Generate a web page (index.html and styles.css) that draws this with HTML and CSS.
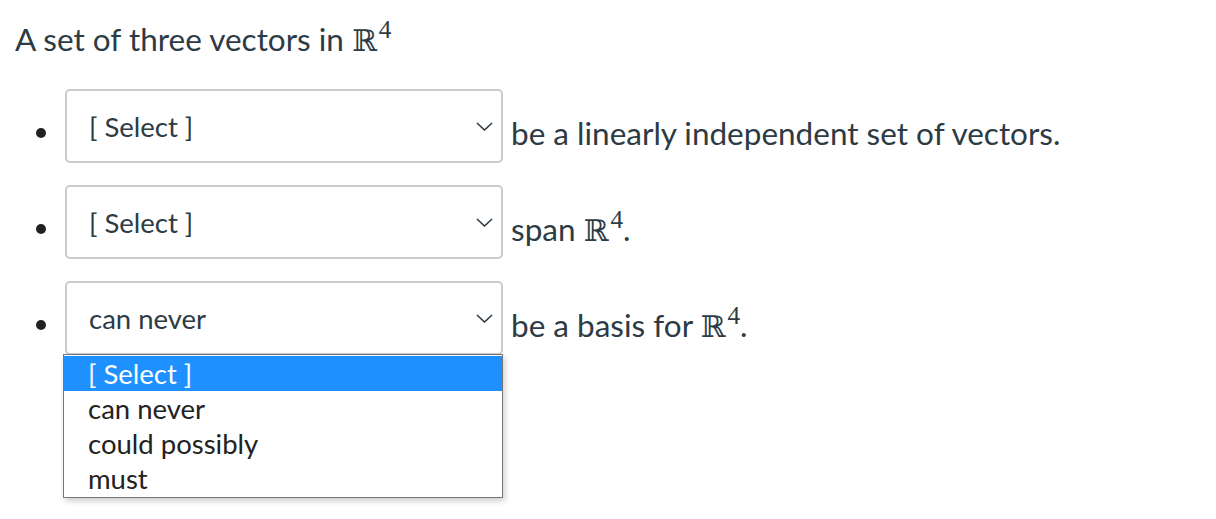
FILE: index.html
```html
<!DOCTYPE html>
<html>
    <head>
        <meta charset="UTF-8">
        <meta name="viewport" content="width=device-width, initial-scale=1">
        <title>Pergunta - Vetores</title>
        <link rel="stylesheet" href="styles.css">
    </head>
    <body>
        <div class="question">
            <p class="question-title">A set of three vectors in <span class="math"><span class="bb">ℝ</span><sup>4</sup></span></p>

            <ul class="answer-list">
                <li class="answer-item">
                    <span class="bullet"></span>
                    <div class="select-box">
                        <span class="select-value">[ Select ]</span>
                        <svg class="chevron" width="17" height="9" viewBox="0 0 17 9"><path d="M1 1 L8.5 8 L16 1" fill="none" stroke="#2d3b45" stroke-width="1.6"/></svg>
                    </div>
                    <span class="answer-text">be a linearly independent set of vectors.</span>
                </li>
                <li class="answer-item">
                    <span class="bullet"></span>
                    <div class="select-box">
                        <span class="select-value">[ Select ]</span>
                        <svg class="chevron" width="17" height="9" viewBox="0 0 17 9"><path d="M1 1 L8.5 8 L16 1" fill="none" stroke="#2d3b45" stroke-width="1.6"/></svg>
                    </div>
                    <span class="answer-text">span <span class="math"><span class="bb">ℝ</span><sup>4</sup></span>.</span>
                </li>
                <li class="answer-item">
                    <span class="bullet"></span>
                    <div class="select-box">
                        <span class="select-value">can never</span>
                        <svg class="chevron" width="17" height="9" viewBox="0 0 17 9"><path d="M1 1 L8.5 8 L16 1" fill="none" stroke="#2d3b45" stroke-width="1.6"/></svg>
                        <!-- lista aberta do select -->
                        <div class="dropdown">
                            <div class="dropdown-option selected">[ Select ]</div>
                            <div class="dropdown-option">can never</div>
                            <div class="dropdown-option">could possibly</div>
                            <div class="dropdown-option">must</div>
                        </div>
                    </div>
                    <span class="answer-text">be a basis for <span class="math"><span class="bb">ℝ</span><sup>4</sup></span>.</span>
                </li>
            </ul>
        </div>
    </body>
</html>
```

FILE: styles.css
```css
html, body {
    height: 100%;
}
body {
    margin: 0;
    background: #fff;
    color: #2d3b45;
    font-family: Lato, "Noto Sans", sans-serif;
}
.question {
    padding: 0 15px 160px;
}
.question-title {
    margin: 0;
    padding-top: 19px;
    font-size: 31.5px;
    line-height: 40px;
}
.math {
    font-family: "DejaVu Serif", "Liberation Serif", serif;
}
.bb {
    font-size: 0.95em;
}
.math sup {
    font-family: "Liberation Serif", "DejaVu Serif", serif;
    font-size: 0.8em;
    vertical-align: 0.5em;
    line-height: 0;
    margin-left: 2px;
}
.answer-list {
    list-style: none;
    margin: 0;
    padding: 0;
    padding-top: 28px;
}
.answer-item {
    display: flex;
    align-items: center;
    margin-bottom: 8px;
}
.bullet {
    width: 10px;
    height: 10px;
    border-radius: 50%;
    background: #222;
    margin-left: 21px;
    margin-right: 19px;
}
.select-box {
    position: relative;
    box-sizing: border-box;
    width: 438px;
    height: 74px;
    border: 2px solid #c7cdd1;
    border-radius: 5px;
    margin-bottom: 14px;
    padding-left: 22px;
    display: flex;
    align-items: center;
    font-size: 27.5px;
}
.select-value {
    flex: 1;
}
.chevron {
    margin-right: 8px;
}
.answer-text {
    margin-left: 8px;
    font-size: 31.5px;
}
.dropdown {
    position: absolute;
    top: calc(100% + 1px);
    left: -4px;
    width: 440px;
    box-sizing: border-box;
    border: 1px solid #767676;
    background: #fff;
    box-shadow: 2px 3px 6px rgba(0, 0, 0, 0.2);
    padding: 1px 0;
    color: #222;
    z-index: 2;
}
.dropdown-option {
    height: 35px;
    line-height: 35px;
    padding-left: 24px;
    font-size: 27.5px;
}
.dropdown-option.selected {
    background: #1e90ff;
    color: #fff;
}
```
